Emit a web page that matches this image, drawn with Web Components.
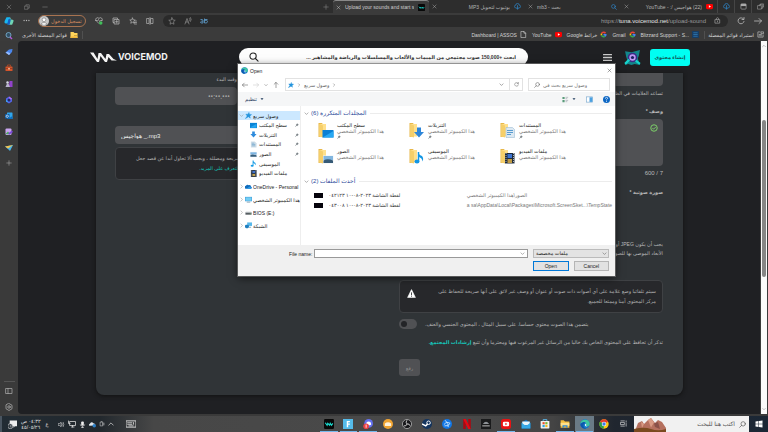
<!DOCTYPE html>
<html lang="ar">
<head>
<meta charset="utf-8">
<title>Voicemod Tuna - Upload sound</title>
<style>
html, body { margin: 0; }
body { background: #3a3a3a; font: 5px/8px "Liberation Sans", "Noto Sans", "DejaVu Sans", sans-serif; color: #ddd; overflow: hidden; }
</style>
</head>
<body>
<app-desktop></app-desktop>
<script>
const BASE = `
*,*::before{box-sizing:border-box}
:host{display:block;white-space:nowrap}
button,input,select,textarea{font:inherit;color:inherit;background:none;border:0;padding:0;margin:0;border-radius:0;outline:0;appearance:none;min-width:0}
button{display:flex;align-items:center;justify-content:center}
a{color:inherit;text-decoration:none}
p,h1,h2,ul{margin:0;padding:0;font-weight:inherit;font-size:inherit;list-style:none}
`;
function define(tag, css, html, setup) {
  const tpl = document.createElement('template');
  tpl.innerHTML = `<style>${BASE}${css}</style>${html}`;
  customElements.define(tag, class extends HTMLElement {
    constructor() {
      super();
      this.attachShadow({ mode: 'open' }).append(tpl.content.cloneNode(true));
    }
    connectedCallback() { if (setup) setup(this, this.shadowRoot); }
  });
}

const line = (d, w = 1.4) => `<path d="${d}" fill="none" stroke="currentColor" stroke-width="${w}" stroke-linecap="round" stroke-linejoin="round"/>`;
const folder = `<path d="M1 2h7l2 3v25H1z" fill="#e8b84a"/><path d="M3 4l13 0v25H3z" fill="#ffe08c"/><path d="M3 4l7 3v24l-7-2z" fill="#f6cf6a"/>`;
const ICONS = {
  close: line('M3 3l10 10M13 3L3 13'),
  restore: line('M2 5.500h8.500V14H2zM5 5.500V2h9v9h-3.500'),
  minus: line('M2 8h12'),
  plus: line('M8 2v12M2 8h12'),
  search: line('M10 10l4.500 4.500M11.500 6.500a5 5 0 1 1-10 0a5 5 0 0 1 10 0z', 1.700),
  searchL: line('M6 10l-4.500 4.500M14.500 6.500a5 5 0 1 1-10 0a5 5 0 0 1 10 0z', 1.500),
  cloud: line('M5 11H4a3 3 0 0 1 0-6 4 4 0 0 1 8 0 3 3 0 0 1 0 6h-1M8 6v8M6 12l2 2 2-2', 1.600),
  tabmenu: `<rect x="2" y="2" width="12" height="12" rx="2" fill="none" stroke="currentColor" stroke-width="1.500"/><rect x="2" y="2" width="12" height="5" fill="currentColor"/>`,
  stack: line('M2 6h8v8H2zM5 6V4h8v8h-3M8 4V2h7v7h-2', 1.200),
  vmod: `<rect width="16" height="16" rx="2" fill="#080808"/><path d="M2 6l3 4 1-3 3 3 1-3 2 3 2-3" fill="none" stroke="#19d8cd" stroke-width="1.800"/>`,
  yt: `<rect y="2" width="16" height="12" rx="3" fill="#f00"/><path d="M6.500 5v6l5-3z" fill="#fff"/>`,
  copilot: `<path d="M4 2h6l-3 10H3Q0 12 1 8z" fill="#19b7f2"/><path d="M10 2l2 4h2q2 0 1 3l-2 5H7l3-8z" fill="#6fd5b4"/><path d="M7 5h4L9 14H5z" fill="#145fc5"/>`,
  dots: `<circle cx="2.500" cy="8" r="1.500" fill="currentColor"/><circle cx="8" cy="8" r="1.500" fill="currentColor"/><circle cx="13.500" cy="8" r="1.500" fill="currentColor"/>`,
  person: `<circle cx="8" cy="8" r="8" fill="#c9c9c9"/><circle cx="8" cy="6" r="3" fill="#fff" stroke="#777"/><path d="M3 13q5-5 10 0-5 4-10 0z" fill="#fff" stroke="#777"/>`,
  health: line('M8 13L2 7a3.500 3.500 0 0 1 6-4 3.500 3.500 0 0 1 6 4M1 7h4l2-2 2 4 2-2h3') + `<circle cx="11.500" cy="12" r="3.500" fill="#41c05a"/>`,
  collect: line('M4 11H2V2h9v2M5 5h9v9H5zM9.500 7v5M7 9.500h5'),
  favs: line('M7 2l1.500 3.500 4 .5-3 2.500 1 4L7 10.500 3.500 12.500l1-4-3-2.500 4-.5zM10 11h5M11 14h4M12 8h3', 1.300),
  split: line('M2 3h4v10H2zM10 3h4v10h-4zM8 1v14', 1.300),
  star: line('M8 1.500l2 4.500 4.500.5-3.500 3 1 5-4-2.500-4 2.500 1-5-3.500-3L6 6z', 1.200),
  read: line('M2 14L6 3l4 11M4 10h4M11 3q2 2 0 4M13 1q3 4 0 8', 1.300),
  translate: `<path d="M1 5q5-1 5 2v5q-5 1-5-2 1-2 5-2M9 3v9q6 1 6-3t-6-2M9 5h6" fill="none" stroke="#5f9fcf" stroke-width="1.600"/>`,
  lock: line('M3 6h10v8H3zM5.500 6V3q2.500-3 5 0v3M8 9v2', 1.700),
  reload: line('M13 4a6 6 0 1 0 1 5M14 1v4h-4', 1.600),
  right: line('M1 8h14M10 3l5 5-5 5', 1.600),
  left: line('M15 8H1M6 3L1 8l5 5', 1.600),
  up: line('M8 15V1M3 6l5-5 5 5', 1.600),
  down: line('M3 6l5 5 5-5', 1.800),
  next: line('M6 3l5 5-5 5', 1.800),
  caretUp: line('M2 11l6-6 6 6', 1.800),
  tri: `<path d="M2 5h12l-6 7z" fill="currentColor"/>`,
  fold: `<path d="M1 2h6l2 2h6v10H1z" fill="#ffd45b"/><path d="M1 11h14v3H1z" fill="#f0b73a"/><path d="M8 9h6" stroke="#a97a1c"/>`,
  doc: line('M3 1h6l4 4v10H3zM9 1v4h4', 1.400),
  google: `<path d="M14 4A7 7 0 0 0 2 5l3 2a4 4 0 0 1 6-1z" fill="#ea4335"/><path d="M2 5a7 7 0 0 0 0 6l3-2V7z" fill="#fbbc05"/><path d="M2 11a7 7 0 0 0 11 2l-3-2a4 4 0 0 1-5-2z" fill="#34a853"/><path d="M8 7h7q.5 4-2 6l-3-2 1-1H8z" fill="#4285f4"/>`,
  blizzard: `<rect width="16" height="16" fill="#173d64"/><path d="M3 4h10M3 8h10M3 12h10" stroke="#2e75ad" stroke-width="2"/>`,
  importer: line('M7 2H2v12h12V9M10 2h5v4h-5zM5 8h5M5 11h6', 1.300),
  railSearch: `<circle cx="7" cy="6" r="5" fill="#324f65" stroke="#7fb8d8" stroke-width="1.600"/><path d="M10 10l4 4" stroke="#b05bd8" stroke-width="3"/>`,
  tag: `<path d="M1 9l7-6 7-1-1 6-6 6z" fill="#4a86ec"/><path d="M1 9l4-1 6 3-3 3z" fill="#9cc0ff"/>`,
  tools: `<path d="M5 5V2h6v3" fill="none" stroke="#b44a23" stroke-width="1.600"/><rect x="1" y="5" width="14" height="9" rx="1" fill="#d3542b"/><path d="M1 9h14" stroke="#6e2714"/><rect x="6.500" y="8" width="3" height="3" fill="#f7c8a6"/>`,
  games: `<path d="M9 2h6v12H8z" fill="#9142c9"/><circle cx="5" cy="5" r="2.500" fill="#d9d9e8"/><path d="M1 14l3-7h3l3 7z" fill="#b9b3cf"/>`,
  office: `<path d="M8 1l6 4v6l-6 4-6-4V5z" fill="#5565e8"/><path d="M8 1l6 4-3 3-3-3z" fill="#b36af0"/><circle cx="8" cy="8" r="3" fill="#202a6a"/><path d="M2 11V7l5 6z" fill="#37b1f5"/>`,
  outlook: `<rect x="4" y="1" width="11" height="13" rx="1" fill="#30a5ec"/><path d="M4 9l5 3 6-4v6H4z" fill="#0c6cbd"/><rect y="4" width="9" height="9" rx="1" fill="#0f5ea8"/><circle cx="4.500" cy="8.500" r="2.300" fill="none" stroke="#fff" stroke-width="1.300"/>`,
  paint: `<rect x="1" y="1" width="12" height="13" rx="2" fill="#c9a5ef"/><path d="M1 12l5-5 5 6z" fill="#4cae5e"/><path d="M6 11l8-6 2 3-7 5z" fill="#7a46d8"/>`,
  plane: `<path d="M0 5l16-3-6 12-4-4z" fill="#48b2e8"/><path d="M0 5l16-3L6 9z" fill="#f3c34e"/>`,
  panel: line('M2 3h12v10H2zM6 3v10', 1.400),
  gear: line('M8 1l6 3.500v7L8 15l-6-3.500v-7zM10.500 8a2.500 2.500 0 1 1-5 0a2.500 2.500 0 0 1 5 0z', 1.500),
  burger: line('M1 3h14M1 8h14M1 13h14', 2.400),
  avatar: `<path d="M1 2l6 1 8-2-1 5-1 3 1 3 1 3-5-1-3 1-3-1-3 1 2-5-1-3z" fill="#12868b"/><circle cx="8" cy="8" r="4.500" fill="#3d2a86"/><circle cx="8" cy="8" r="3" fill="#bd9bf2"/><circle cx="8" cy="8" r="1.500" fill="#1c2060"/><path d="M1 14l4-4M15 14l-4-3" stroke="#16d3cb" stroke-width="2"/>`,
  check: `<circle cx="8" cy="8" r="6.500" fill="none" stroke="#7dd069" stroke-width="2"/><path d="M5 8l2 2.500L11.500 6" fill="none" stroke="#7dd069" stroke-width="1.800"/>`,
  warn: `<path d="M8 1l7 14H1z" fill="#fff" stroke="#fff" stroke-linejoin="round"/><path d="M8 6v5M8 12v1.600" stroke="#26272a" stroke-width="1.500"/>`,
  edge: `<circle cx="8" cy="8" r="7.500" fill="#1679c9"/><path d="M.7 7A7.500 7.500 0 0 1 15.500 8q0 4-4 3.500-3-.5-1.500-3Q9 4.500 5 5 2 5.400.7 7z" fill="#3fc6a0"/><path d="M5 5Q1 6 .6 9A7.500 7.500 0 0 0 10 15.200Q5 14 5.500 9 6 6.500 9 6.500 7.500 4.600 5 5z" fill="#0d57ad"/><path d="M8.500 7.500q2 0 1.500 2-1 2 2 2.200-3 1-4-1-.7-2 .5-3.200z" fill="#e9f6fb"/>`,
  quick: `<path d="M9 1l1 4 5 1-4 3 1 5-4-3-7 4 4-6-3-4 5 0z" fill="#2494dd" stroke="#2494dd"/>`,
  pin: `<path d="M9 2l5 5-2 1-2 3-2 1-4-4 1-2 3-2zM5 10l-4 5 5-4z" fill="#7a8086" stroke="#7a8086"/>`,
  desk: `<rect y="2" width="16" height="12" fill="#0a84d6"/><path d="M1 12L15 4v9H1z" fill="#23a5f1"/>`,
  dl: `<path d="M5 1h6v6h4l-7 8-7-8h4z" fill="#2e8bdc"/>`,
  docs: `<path d="M2 1h9l4 4v10H2z" fill="#cfdde7"/><path d="M4 5h6M4 8h8M4 11h8" stroke="#5d9cc8" stroke-width="1.300"/>`,
  pics: `<rect y="2" width="16" height="12" fill="#e7eef3"/><path d="M1 3h14v5H1z" fill="#7db5e2"/><path d="M1 9q5-3 14 1v3H1z" fill="#355d7b"/>`,
  music: `<path d="M7 1v11" stroke="#159be5" stroke-width="2"/><path d="M7 1q1 4 5 5 2 3 0 6 0-4-5-5z" fill="#159be5"/><ellipse cx="5" cy="13" rx="3.500" ry="2.400" fill="#159be5"/>`,
  video: `<rect x="2" y="0" width="13" height="16" fill="#27313f"/><path d="M4 0v16M13 0v16" stroke="#a8b3be" stroke-width="1.300" stroke-dasharray="1.500"/><path d="M5.500 2h6v5h-6z" fill="#4475cc"/><path d="M5.500 9h6v5h-6z" fill="#c3a14c"/>`,
  onedrive: `<path d="M1 13a3.500 3.500 0 0 1 1-6.500Q5 2 9 5q4-1 4.500 3 2.500 1 2 3-.5 2-2.500 2z" fill="#0f6cbd"/><path d="M4 13l6-5 5 3q0 2-2 2z" fill="#2a9be8"/>`,
  pc: `<rect y="2" width="16" height="10" fill="#3c96d2"/><rect x="1" y="3" width="14" height="8" fill="#72cdf4"/><path d="M4 14h8" stroke="#5b7f99" stroke-width="1.500"/>`,
  drive: `<path d="M1 8h14v5H1z" fill="#555c61"/><path d="M2 6h12l1 2H1z" fill="#b8bec3"/><path d="M11 11h2" stroke="#78e27a" stroke-width="1.500"/>`,
  network: `<rect x="5" y="1" width="11" height="8" fill="#58b8ea"/><rect y="6" width="9" height="8" rx="3" fill="#1f7fc0"/><path d="M9 12h5" stroke="#4b88ab" stroke-width="1.600"/>`,
  view: `<path d="M1 2h5v5H1zM1 9h5v5H1z" fill="#5a9b7a"/><path d="M8 3h6M8 6h4M8 10h6M8 13h4" stroke="#8a9299" stroke-width="1.200"/>`,
  pane: `<rect x="1" y="2" width="14" height="12" fill="#fff" stroke="#73a4cd" stroke-width="1.400"/><rect x="8" y="3" width="6.500" height="10.500" fill="#4aa0e0"/>`,
  help: `<circle cx="8" cy="8" r="8" fill="#0b66c4"/><path d="M5.500 6q0-3 2.700-3 2.500.2 2.300 2.500Q10 7 8 8.500V10M8 11.500v2" fill="none" stroke="#fff" stroke-width="1.700"/>`,
  fDesk: folder + `<rect x="9" y="16" width="22" height="15" fill="#0a7fd4"/><path d="M9 31L31 18v13z" fill="#27a8f3"/>`,
  fDl: folder + `<path d="M16 11h8v9h6L20 31 10 20h6z" fill="#2e86d8"/>`,
  fDocs: folder + `<path d="M12 11h13l4 4v16H12z" fill="#dce9f3" stroke="#8fb2cd"/><path d="M14 17h12M14 21h12M14 25h8" stroke="#4a93cc" stroke-width="1.800"/>`,
  fPics: folder + `<path d="M10 15h21v16H10z" fill="#edf2f5"/><path d="M11 16h19v8H11z" fill="#82b6df"/><path d="M11 25q8-5 19 0v5H11z" fill="#365a76"/>`,
  fMusic: folder + `<path d="M19 8v18" stroke="#1296e4" stroke-width="3"/><path d="M18 8q2 6 8 8 4 5 1 11 0-7-9-10z" fill="#1296e4"/><ellipse cx="16" cy="27" rx="5" ry="4" fill="#1296e4"/>`,
  fVideo: folder + `<rect x="10" y="10" width="19" height="21" fill="#202a3a"/><path d="M12 10v21M27 10v21" stroke="#a7b4c0" stroke-width="2" stroke-dasharray="2"/><path d="M15 12h9v8h-9z" fill="#3c73d2"/><path d="M15 22h9v8h-9z" fill="#bf9b45"/>`,
  notif: `<path d="M3 1h13v10h-4l-2 3v-3H3z" fill="#eee"/><circle cx="4" cy="11" r="4.500" fill="#333b42" stroke="#eee"/><path d="M5 9v4" stroke="#eee"/>`,
  speaker: line('M1 6h2l4-3v10L3 10H1zM9 5q2 3 0 6M12 3q3 5 0 10', 1.300),
  monitor: line('M4 3h11v8H4zM7 14h5M9 11v3M1 2v5h3', 1.500),
  mic: `<rect x="5" y="1" width="6" height="9" rx="2" fill="#eee"/><path d="M2 8q6 7 12 0M8 12v3M5 15h6" stroke="#eee" stroke-width="1.600" fill="none"/>`,
  tcloud: `<path d="M1 11a3 3 0 0 1 1-5q4-6 8-1 5 1 4 5z" fill="#dfe6ec"/><circle cx="12" cy="11" r="4" fill="#2b80c8"/>`,
  usb: line('M4 3h6v10H4zM10 6h4M10 10h4M6 1h2', 1.300),
  kbd: `<rect y="3" width="16" height="10" fill="none" stroke="#ddd" stroke-width="1.500"/><path d="M2 6h8M2 8.500h8M4 11h8M12 5v4" stroke="#ddd" stroke-width="1.300"/>`,
  fn: `<rect width="16" height="16" fill="#55bbea"/><path d="M6 3h5v2H8.300v2H11v2H8.300v4H6z" fill="#fff"/>`,
  discord: `<circle cx="9" cy="7" r="7" fill="#6470ee"/><path d="M5 9q0-5 4-5t4 5q-4 2-8 0z" fill="#fff"/><circle cx="5" cy="11.500" r="4.500" fill="#ec4145"/><path d="M5 9v5" stroke="#fff" stroke-width="1.300"/>`,
  orange: `<circle cx="8" cy="8" r="8" fill="#f0a432"/><path d="M3 7q5-4 10 0v4H3z" fill="#fff2d8"/>`,
  obs: `<circle cx="8" cy="8" r="7.300" fill="#17171a" stroke="#bbb" stroke-width="1.200"/><path d="M8 8Q5 5 8 2M8 8q4-1 5 3M8 8q-1 4-5 3" stroke="#ccc" stroke-width="1.500" fill="none"/>`,
  steam: `<circle cx="8" cy="8" r="8" fill="#14355f"/><circle cx="10.500" cy="6" r="2.800" fill="none" stroke="#fff" stroke-width="1.500"/><path d="M0 8l6 3 3-3" stroke="#fff" stroke-width="2.500" fill="none"/>`,
  bnet: `<circle cx="8" cy="8" r="8" fill="#1277e6"/><path d="M5 2q6 5 5 11M3 9q5-6 10-2-3 5-9 4" stroke="#cfeaff" stroke-width="1.400" fill="none"/>`,
  netflix: `<path d="M2 0h4v16H2zM10 0h4v16h-4z" fill="#b0060f"/><path d="M2 0h4l8 16h-4z" fill="#e50914"/>`,
  ghost: `<rect width="16" height="16" fill="#1a1b1c"/><path d="M3 8q5-7 10 0z" fill="#8e9296"/><path d="M2 11h12" stroke="#bbb" stroke-width="1.600"/>`,
  ytapp: `<rect width="16" height="16" rx="4" fill="#e81414"/><rect x="3" y="4.500" width="10" height="7" rx="2" fill="#fff"/><path d="M7 6v4l3-2z" fill="#e81414"/>`,
  mail: `<path d="M1 6l7-5 7 5v9H1z" fill="#0d6fbe"/><path d="M2 4h12v6H2z" fill="#e9f5fc"/><path d="M1 6l7 5 7-5v9H1z" fill="#36a9e8"/>`,
  store: `<path d="M5 4V1h6v3" fill="none" stroke="#5db8ea" stroke-width="1.500"/><rect x="1" y="3" width="14" height="12" rx="1" fill="#f2f2f2"/><path d="M4 5h3.500v3.500H4z" fill="#e9502d"/><path d="M8.500 5H12v3.500H8.500z" fill="#7fb82e"/><path d="M4 9.500h3.500V13H4z" fill="#2aa2e0"/><path d="M8.500 9.500H12V13H8.500z" fill="#f7b81c"/>`,
  explorer: `<path d="M1 2h5l2 2h7v10H1z" fill="#f5bd3c"/><path d="M1 6h14v5H1z" fill="#ffe08a"/><path d="M4 10h8v4h-2v-2H6v2H4z" fill="#2e8bdc"/>`,
  chrome: `<circle cx="8" cy="8" r="7.500" fill="#f9c915"/><path d="M8 8L1.500 4.300A7.500 7.500 0 0 1 14.500 4.300z" fill="#e23c2e"/><path d="M8 8L1.500 4.300A7.500 7.500 0 0 0 7.500 15.500z" fill="#2c9e4b"/><circle cx="8" cy="8" r="3.600" fill="#fff"/><circle cx="8" cy="8" r="2.700" fill="#3d7de8"/>`,
  taskview: line('M2 5.500h8v5H2zM2 2h8M2 14h8M14 2v3M14 8v6', 1.500),
  win: `<path d="M1 3l6-1v5.500H1zM8 1.800L15 1v6.500H8zM1 8.500h6V14l-6-1zM8 8.500h7V15l-7-.8z" fill="#fff"/>`
};

customElements.define('ui-icon', class extends HTMLElement {
  constructor() { super(); this.attachShadow({ mode: 'open' }); }
  connectedCallback() {
    const n = this.getAttribute('name');
    const big = /^f[A-Z]/.test(n) ? 32 : 16;
    this.shadowRoot.innerHTML = `<style>:host{display:block;flex:none;width:var(--icon,8px);height:var(--icon,8px)}svg{display:block;width:100%;height:100%}</style><svg viewBox="0 0 ${big} ${big}" aria-hidden="true">${ICONS[n]}</svg>`;
  }
});
const ic = (n, s) => `<ui-icon name="${n}"${s ? ` style="--icon:${s}px"` : ''}></ui-icon>`;

define('browser-tab', `
:host{display:flex;align-items:center;gap:4px;width:12.5%;padding:0 4px 0 3px;color:#b5b5b5}
:host([active]){background:#3b3b3b;border-top:1px solid #8a8a8a;color:#d0d0d0;border-radius:3px 3px 0 0}
.t{flex:1;min-width:0;overflow:hidden;text-align:left}
:host([rtl]) .t{direction:rtl;text-align:right}
`, `<button aria-label="Close tab">${ic('close', 5)}</button><span class="t"><slot></slot></span><slot name="icon"></slot>`);

define('tab-strip', `
:host{display:flex;height:13px;background:#2d2d2d;color:#8c8c8c}
.win{display:flex;flex:1;padding-left:6px;gap:12px;align-items:center}
.win .add{margin-left:auto;margin-right:4px}
.end{display:flex;color:#aaa}
.end button{width:17px;border-left:1px solid #454545}
`, `<div class="win"><button aria-label="Close">${ic('close', 6)}</button><button aria-label="Restore">${ic('restore', 6)}</button><button aria-label="Minimize">${ic('minus', 6)}</button><button class="add" aria-label="New tab">${ic('plus', 6)}</button></div>
<browser-tab active>Upload your sounds and start sh<ui-icon slot="icon" name="vmod" style="--icon:7px"></ui-icon></browser-tab>
<browser-tab rtl>يوتيوب لتحويل MP3<ui-icon slot="icon" name="cloud" style="--icon:7px;color:#2f88cc"></ui-icon></browser-tab>
<browser-tab>mb3 - بحث<ui-icon slot="icon" name="search" style="--icon:6px;color:#2f88cc"></ui-icon></browser-tab>
<browser-tab rtl>(22) هواجيس /: - YouTube<ui-icon slot="icon" name="yt" style="--icon:7px"></ui-icon></browser-tab>
<div class="end"><button aria-label="Downloads" style="color:#2f88cc">${ic('cloud', 7)}</button><button aria-label="Tab actions">${ic('tabmenu', 7)}</button><button aria-label="Workspaces">${ic('stack', 7)}</button></div>`);

define('address-bar', `
:host{display:flex;align-items:center;height:15px;background:#3b3b3b;color:#bdbdbd;padding:0 6px 0 4px;gap:9px}
.me{height:12px;width:48px;margin:0 0 0 -1px;border:1px solid #a87350;border-radius:6px;gap:2px;justify-content:flex-start;color:#d98f60;padding-right:5px}
.me span{flex:1;text-align:right}
.field{flex:1;display:flex;align-items:center;gap:8px;height:12px;padding:0 7px 0 5px;border-radius:6px;background:#2a2a2a;color:#999}
.url{flex:1;text-align:right;font-size:6px}
.url b{font-weight:400;color:#e6e6e6}
`, `<button aria-label="Copilot">${ic('copilot', 10)}</button><button aria-label="More">${ic('dots', 7)}</button>
<button class="me">${ic('person', 10)}<span>تسجيل الدخول</span></button>
<button aria-label="Performance">${ic('health', 8)}</button><button aria-label="Collections">${ic('collect', 8)}</button><button aria-label="Favorites">${ic('favs', 8)}</button><button aria-label="Split screen">${ic('split', 8)}</button>
<div class="field">${ic('star')}${ic('read')}${ic('translate')}<a class="url" href="#">https://<b>tuna.voicemod.net</b>/upload-sound</a>${ic('lock', 7)}</div>
<button aria-label="Reload">${ic('reload', 8)}</button><button aria-label="Back">${ic('right', 8)}</button>`);

define('bookmark-bar', `
:host{display:flex;align-items:center;height:13px;background:#3b3b3b;color:#d4d4d4;padding:0 4px 0 22px;gap:5px}
a{display:flex;align-items:center;gap:3px}
a:first-of-type{margin-right:auto;padding-right:4px;border-right:1px solid #505050}
a:last-of-type{padding-left:3px;border-left:1px solid #505050}
`, `<a href="#">قوائم المفضلة الأخرى ${ic('fold', 8)}</a>
<a href="#">Dashboard | ASSOS ${ic('doc', 7)}</a><a href="#">YouTube ${ic('yt', 7)}</a><a href="#"><span dir="rtl">خرائط Google</span> ${ic('google', 7)}</a><a href="#">Gmail ${ic('google', 7)}</a><a href="#">Blizzard Support - S... ${ic('blizzard', 7)}</a><a href="#">استيراد قوائم المفضلة ${ic('importer', 7)}</a>`);

define('side-rail', `
:host{display:flex;flex-direction:column;align-items:center;gap:8px;width:18px;margin-top:-9px;color:#b0b0b0}
hr{width:11px;border:0;border-top:1px solid #555;margin:auto 0 -3px}
button:last-child{margin-bottom:3px}
`, ['railSearch', 'tag', 'tools', 'games', 'office', 'outlook', 'paint', 'plane', 'plus'].map(n => `<button aria-label="${n}">${ic(n, n === 'plus' ? 6 : 8)}</button>`).join('') +
`<hr><button aria-label="panel">${ic('panel', 8)}</button><button aria-label="settings">${ic('gear', 8)}</button>`);

define('site-header', `
:host{display:flex;align-items:center;height:32px;padding:0 70px 0 72px}
.logo{display:flex;align-items:center;gap:1px;font:700 9px/12px "Inter","Open Sans",sans-serif;color:#f2f2f2}
.logo svg{width:27px;height:10px}
label{display:flex;align-items:center;flex:1;height:18px;margin:0 75px 0 71px;padding:0 12px 0 10px;border-radius:9px;background:#fdfdfd;color:#222}
input{flex:1;direction:rtl;font-weight:600}
input::placeholder{color:#333;opacity:1}
.end{display:flex;align-items:center;gap:12px}
.cta{width:40px;height:17px;margin-left:-3px;border-radius:3px;background:#00fff3;color:#155;font-weight:600}
`, `<a class="logo" href="#"><svg viewBox="0 0 54 20" aria-hidden="true"><path d="M0 1l7 0 8 13 2-12h5l9 12 2-10h5l9 10 7 3H43l-6-7-3 10h-4L21 8l-3 12h-4z" fill="#f4f4f4"/></svg>VOICEMOD</a>
<label>${ic('search', 10)}<input type="search" aria-label="Search" placeholder="ابحث +150,000 صوت مجتمعي من الميمات والألعاب والمسلسلات والرياضة والمشاهير ..."></label>
<div class="end"><button aria-label="Menu" style="color:#ccc">${ic('burger', 9)}</button>${ic('avatar', 17)}<button class="cta">إنشاء محتوى</button></div>`);

define('info-box', `
:host{display:flex;align-items:flex-start;gap:10px;height:33px;padding:5px 6px 6px 7px;border:1px solid #3f4144;border-radius:4px;background:#27282b;color:#b2b2b2;line-height:10px}
.t{flex:1;direction:rtl}
`, `<slot name="icon"></slot><div class="t"><slot></slot></div>`);

define('upload-form', `
:host{display:block;margin:0 77px 0 78px;padding:0 20px 19px 19px;background:#303437;border-radius:0 0 8px 8px;box-shadow:0 1px 4px #111;color:#b9b9b9}
form{display:grid;grid-template-columns:1fr 1fr;gap:20px}
.c{display:flex;flex-direction:column;direction:rtl;min-width:0}
.c input[type=text],textarea{display:block;width:100%;background:#505154;border-radius:4px}
.tags{height:13px;border-radius:0 0 4px 4px!important}
.hint{margin-top:3px}
label.l{margin:10px 0 4px;font-weight:600}
.ta{position:relative;height:47px}
textarea{height:100%;resize:none}
.ta ui-icon{position:absolute;top:5px;right:5px}
.count{margin-top:3px;font-size:6px;direction:ltr;text-align:right}
.img{margin:11px 0 44px;font-weight:600}
.lines{line-height:9px}
.alert{margin-top:22px}
.sw{display:flex;align-items:center;gap:8px;margin-top:6px;direction:ltr}
.sw span{direction:rtl}
.sw input{width:18px;height:10px;border-radius:5px;background:#505154;padding:2px}
.sw input::before{content:"";display:block;width:6px;height:6px;border-radius:3px;background:#232427}
.note{margin-top:9px}
.note a,info-box a{color:#14c9bd}
.note a{font-weight:600}
.go{align-self:flex-end;width:21px;height:17px;margin-top:13px;border-radius:3px;background:#505154;color:#8a8a8a}
.pair{display:grid;grid-template-columns:1fr 1fr;gap:20px;direction:ltr;margin-bottom:21px}
.pair label{display:block;padding-top:2px;direction:rtl}
.left input{height:18px}
.pair input{margin-top:4px;padding:0 7px;direction:ltr;text-align:right;font-family:"Open Sans",sans-serif;font-size:7px}
.pair input::placeholder{color:#a8a8a8;opacity:1}
.c .file{padding:0 6px;direction:ltr;color:#eee;font-size:6px}
.left info-box{margin-top:3px;direction:ltr;padding-left:20px}
.left p{direction:rtl;text-align:left}
.left p+p{padding-left:63px}
`, `<form><div class="c left">
<div class="pair"><label>وقت البدء<input type="text" placeholder="••:••.•••"></label><label>وقت الانتهاء<input type="text" placeholder="••:••.•••"></label></div>
<input class="file" type="text" aria-label="File" value="هواجيس _.mp3">
<info-box><p>سيتم وضع علامة صريحة ومضللة ، ويجب ألا تحاول أبدا عن قصد جعل</p><p><a href="#">التعرف على المزيد.</a></p></info-box>
</div><div class="c">
<input class="tags" type="text" aria-label="Tags">
<p class="hint">تساعد العلامات في الظهور</p>
<label class="l" for="d">وصف *</label>
<div class="ta"><textarea id="d"></textarea>${ic('check', 8)}</div>
<p class="count">600 / 7</p>
<p class="img">صورة صوتية *</p>
<p class="lines">يجب أن يكون JPEG أو PNG</p><p class="lines">الأبعاد الموصى بها للصور</p>
<info-box class="alert" dir="ltr"><ui-icon slot="icon" name="warn" style="--icon:9px;margin-top:3px"></ui-icon><p>سيتم تلقائيا وضع علامة على أي أصوات ذات صوت أو عنوان أو وصف غير لائق على أنها صريحة للحفاظ على</p><p>مركز المحتوى آمنا وممتعا للجميع.</p></info-box>
<label class="sw"><input type="checkbox"><span>يتضمن هذا الصوت محتوى حساسا. على سبيل المثال ، المحتوى الجنسي والعنف.</span></label>
<p class="note">تذكر أن تحافظ على المحتوى الخاص بك خاليا من الرسائل غير المرغوب فيها ومحترما وأن تتبع <a href="#">إرشادات المجتمع.</a></p>
<button class="go" type="button">رفع</button>
</div></form>`);

define('scroll-track', `
:host{display:flex;flex-direction:column;align-items:center;justify-content:space-between;width:8px;padding:3px 0;background:#fafafa;border:solid #3a3a3a;border-width:0 1px;color:#777}
.thumb{width:4px;flex:0 0 43%;margin-bottom:58px;border-radius:2px;background:#858585}
`, `${ic('caretUp', 4)}<div class="thumb"></div>${ic('down', 4)}`);

define('tree-item', `
:host{display:flex;align-items:center;gap:1px;height:9px;padding-left:1px;color:#222}
:host([sel]){background:#cce8ff}
:host([sub]){padding:0 1px 0 12px;gap:2px}
.x{flex:1;min-width:0;overflow:hidden}
.arr,.p{color:#999}
:host([sub]) .arr,:host(:not([pin])) .p{display:none}
`, `<span class="arr"></span><span class="i"></span><span class="x"><slot></slot></span><span class="p">${ic('pin', 4)}</span>`, (h, r) => {
  r.querySelector('.arr').innerHTML = ic(h.hasAttribute('sel') ? 'down' : 'next', 5);
  r.querySelector('.i').innerHTML = ic(h.getAttribute('icon'), 7);
});

define('folder-tile', `
:host{display:flex;gap:3px;height:20px;color:#222;line-height:6px}
small{display:block;font-size:5px;color:#777}
.p{display:none}
:host([pin]) .p{display:block;margin-top:1px}
`, `<span class="i"></span><div><slot></slot><small>هذا الكمبيوتر الشخصي</small><span class="p">${ic('pin', 4)}</span></div>`, (h, r) => {
  r.querySelector('.i').innerHTML = ic(h.getAttribute('icon'), 16);
});

define('group-title', `
:host{display:flex;align-items:center;gap:2px;font-size:6px;color:#2c4a9a}
hr{flex:1;border:0;border-top:1px solid #ececec;margin:0 0 0 2px}
ui-icon{color:#777}
`, `${ic('down', 5)}<h2 dir="rtl"><slot></slot></h2><hr>`);

define('open-dialog', `
:host{position:absolute;left:31%;top:64px;width:377px;display:flex;flex-direction:column;background:#fff;color:#222;box-shadow:0 0 0 1px #777a,0 2px 8px #000a}
.title{display:flex;align-items:center;gap:2px;height:13px;padding:0 3px}
.title button{margin-left:auto;color:#444}
.nav{display:flex;align-items:center;height:15px;padding:0 5px 0 4px;gap:5px;color:#666}
.box{display:flex;align-items:center;gap:3px;height:13px;border:1px solid #e2e2e2;padding:0 2px}
.addr{flex:1;margin-left:1px;padding-right:5px}
.addr ui-icon:last-child{margin-left:auto}
.re{width:14px;margin-left:-6px;justify-content:center}
.find{width:82px;padding:0 5px}
.find input{flex:1;color:#777}
.find input::placeholder{color:#777;opacity:1}
.bar{display:flex;align-items:center;height:14px;padding:0 5px 0 7px;gap:3px;background:#f5f6f7;color:#1e395b}
.bar .m{display:flex;align-items:center;gap:3px}
.bar .sp{flex:1}
.bar button:nth-last-child(-n+2){margin-left:7px}
.main{display:grid;grid-template-columns:63px 1fr;height:139px}
.tree{border-right:1px solid #eee;padding-top:5px}
.quick{display:flex;flex-direction:column;justify-content:space-between;height:67px}
.rest{display:flex;flex-direction:column;gap:4px;margin-top:4px}
.list{padding:3px 3px 0}
.tiles{display:grid;grid-template-columns:repeat(3,91px);gap:6px 0;padding:5px 0 9px 14px}
table{border-collapse:collapse;margin:5px 0 0 10px}
td{padding:0;height:10px;color:#333}
td:nth-child(1){width:15px}
td:nth-child(2){width:144px}
td:nth-child(3){color:#777}
i{display:block;width:9px;height:5px;background:#06040c}
.foot{display:grid;grid-template-columns:1fr 76px;gap:3px 5px;padding:4px 6px 5px 51px;background:#f0f0f0}
.foot label{display:flex;gap:2px;align-items:center}
.combo{flex:1;display:flex;align-items:center;height:9px;border:1px solid #999;background:#fff;padding-right:2px;color:#777}
.combo input{flex:1}
.sel{position:relative;display:block!important}
select{width:100%;height:9px;border:1px solid #bbb;background:#e3e3e3;padding:0 2px;line-height:7px}
.sel ui-icon{position:absolute;right:2px;top:2px;color:#666}
.btns{grid-column:2;display:grid;grid-template-columns:1fr 1fr;gap:5px}
.btns button{height:10px;border:1px solid #b5b5b5;background:#e2e2e2}
.btns button:first-child{border-color:#0078d7}
`, `<div class="title">${ic('edge', 7)}<h1>Open</h1><button aria-label="Close">${ic('close', 5)}</button></div>
<div class="nav"><button aria-label="Back">${ic('left', 6)}</button><button aria-label="Forward" style="color:#ccc">${ic('right', 6)}</button><button aria-label="Recent">${ic('down', 4)}</button><button aria-label="Up">${ic('up', 6)}</button>
<div class="box addr">${ic('quick', 6)}${ic('next', 4)}<span>وصول سريع</span>${ic('next', 4)}${ic('down', 5)}</div><button class="box re" aria-label="Refresh">${ic('reload', 5)}</button>
<label class="box find">${ic('searchL', 6)}<input type="text" aria-label="Search" placeholder="وصول سريع بحث في"></label></div>
<div class="bar"><button class="m">تنظيم ${ic('tri', 4)}</button><span class="sp"></span><button class="m" aria-label="View">${ic('view', 7)}${ic('tri', 4)}</button><button aria-label="Preview pane">${ic('pane', 7)}</button><button aria-label="Help">${ic('help', 7)}</button></div>
<div class="main"><div class="tree"><div class="quick"><tree-item sel icon="quick">وصول سريع</tree-item><tree-item sub pin icon="desk">سطح المكتب</tree-item><tree-item sub pin icon="dl">التنزيلات</tree-item><tree-item sub pin icon="docs">المستندات</tree-item><tree-item sub pin icon="pics">الصور</tree-item><tree-item sub icon="music">الموسيقى</tree-item><tree-item sub icon="video">ملفات الفيديو</tree-item></div>
<div class="rest"><tree-item icon="onedrive">OneDrive - Personal</tree-item><tree-item icon="pc">هذا الكمبيوتر الشخصي</tree-item><tree-item icon="drive">BIOS (E:)</tree-item><tree-item icon="network">الشبكة</tree-item></div></div>
<div class="list"><group-title><bdi dir="ltr">المجلدات المتكررة (6)</bdi></group-title>
<div class="tiles"><folder-tile pin icon="fDesk">سطح المكتب</folder-tile><folder-tile pin icon="fDl">التنزيلات</folder-tile><folder-tile pin icon="fDocs">المستندات</folder-tile><folder-tile icon="fPics">الصور</folder-tile><folder-tile icon="fMusic">الموسيقى</folder-tile><folder-tile icon="fVideo">ملفات الفيديو</folder-tile></div>
<group-title><bdi dir="ltr">أحدث الملفات (2)</bdi></group-title>
<table><tr><td><i></i></td><td><bdi dir="rtl">لقطة الشاشة ٢٠٢٣-٠٨-١٠ ٠٤٢١٢٣</bdi></td><td>الصور\\هذا الكمبيوتر الشخصي</td></tr><tr><td><i></i></td><td><bdi dir="rtl">لقطة الشاشة ٢٠٢٣-٠٨-١٠ ٠٤٣٠٠٨</bdi></td><td>a sa\\AppData\\Local\\Packages\\Microsoft.ScreenSket...\\TempState</td></tr></table></div></div>
<div class="foot"><label>File name:<span class="combo"><input type="text">${ic('down', 5)}</span></label><label class="sel"><select aria-label="File type"><option>ملفات مخصصة</option></select>${ic('down', 5)}</label><div class="btns"><button>Open</button><button>Cancel</button></div></div>`);

define('task-bar', `
:host{display:flex;height:16px;background:linear-gradient(90deg,#222c34 0,#22282d 13%,#474747 20%,#4a4a4a 60%,#444 72%,#20262f 80%,#1b2735);color:#e2e2e2}
.tray{display:flex;align-items:center;gap:3px;padding-left:6px;flex:1;border-left:2px solid #4a5560}
.time{line-height:6px;text-align:center;margin:0 2px 0 1px}
.ime{margin-right:6px}
.tray ui-icon:last-child{margin-left:9px}
.apps{display:grid;grid-template-columns:repeat(16,1fr);width:41%}
.apps button{border-bottom:1px solid transparent}
.apps .on{border-image:linear-gradient(90deg,transparent 10%,#76b9ed 10%,#76b9ed 90%,transparent 90%) 1}
.apps .cur{background:#6a7a86}
label{display:flex;align-items:center;gap:4px;width:15%;background:#f1f1f1;color:#555;padding-right:3px;overflow:hidden;font-size:6px}
label svg{width:32px;height:16px;flex:none}
input{flex:1;direction:rtl}
input::placeholder{color:#555;opacity:1}
.win{width:19px}
`, `<div class="tray">${ic('notif', 9)}<div class="time">٠٤:٣٢ ص<br>٤٥/٠٥/٢٦</div><span class="ime">ع</span>${ic('speaker', 7)}${ic('monitor', 8)}${ic('mic', 7)}${ic('tcloud', 7)}${ic('usb', 6)}${ic('caretUp', 6)}${ic('kbd', 10)}</div>
<div class="apps">${[['vmod', 1], ['fn', 1], ['discord', 1], ['orange'], ['obs'], ['steam'], ['bnet'], ['netflix'], ['ghost'], ['ytapp', 1], ['mail'], ['store'], ['explorer', 1], ['edge', 2], ['chrome'], ['taskview']].map(([n, o]) => `<button aria-label="${n}" class="${o ? 'on' : ''} ${o > 1 ? 'cur' : ''}">${ic(n, n === 'taskview' ? 7 : 10)}</button>`).join('')}</div>
<label><svg viewBox="0 0 64 32" aria-hidden="true"><path d="M2 30L8 14l8-4 4 6 8-8 6-4 8 10 6-6 8 4 8 12 4 8z" fill="#b5705e"/><path d="M28 8l6-4 6 9-6 10zM14 12l6 4-4 8z" fill="#d99a84"/><path d="M40 15l8-3 4 14-10-4z" fill="#8a5149"/><path d="M0 26q20-5 34 0t30 0v6H0z" fill="#7a4a1f"/></svg><input type="search" aria-label="Search" placeholder="اكتب هنا للبحث">${ic('searchL', 7)}</label>
<button class="win" aria-label="Start">${ic('win', 8)}</button>`);

define('app-desktop', `
:host{display:flex;flex-direction:column;min-height:100vh;position:relative}
.mid{display:flex;flex:1}
main{flex:1;min-width:0;background:#1f2023;border-radius:4px 0 0 4px;overflow:hidden}
task-bar{margin-top:2px}
`, `<tab-strip></tab-strip><address-bar></address-bar><bookmark-bar></bookmark-bar>
<div class="mid"><side-rail></side-rail><main><site-header></site-header><upload-form></upload-form></main><scroll-track></scroll-track></div>
<task-bar></task-bar><open-dialog role="dialog" aria-label="Open"></open-dialog>`);
</script>
</body>
</html>
